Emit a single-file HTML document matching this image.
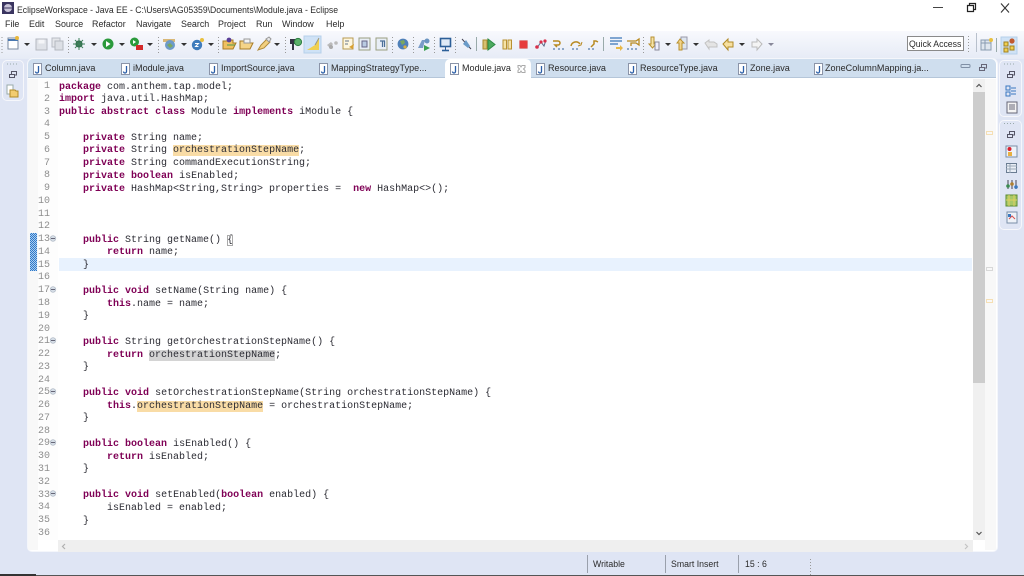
<!DOCTYPE html>
<html><head><meta charset="utf-8"><style>
html,body{margin:0;padding:0}
body{width:1024px;height:576px;overflow:hidden;position:relative;background:#dfe5f4;font-family:"Liberation Sans",sans-serif;color:#222}
.a{position:absolute}
.t{position:absolute;white-space:nowrap;font-size:9.6px;line-height:12px;color:#2a2a2a;transform-origin:0 50%;transform:scaleX(.945)}
.m{transform:scaleX(.93)}
.s{transform:scaleX(.91)}
pre{position:absolute;margin:0;font-family:"Liberation Mono",monospace;font-size:10px;line-height:12.77px;color:#2b2b33}
b{color:#7f0055;font-weight:bold}
i{font-style:normal}
.o{background:#f9dca6}.g{background:#d4d4d4}
</style></head><body>
<div class="a" style="left:0;top:0;width:1024px;height:31px;background:#fff"></div>
<div class="a" style="left:0;top:31px;width:1024px;height:28px;background:linear-gradient(#f8f9fd,#e6ebf6)"></div>
<div class="t" style="left:17px;top:4px;font-size:9.4px;transform:scaleX(.92)">EclipseWorkspace - Java EE - C:\Users\AG05359\Documents\Module.java - Eclipse</div>
<div class="t m" style="left:5px;top:19px">File</div><div class="t m" style="left:29px;top:19px">Edit</div><div class="t m" style="left:55px;top:19px">Source</div><div class="t m" style="left:92px;top:19px">Refactor</div><div class="t m" style="left:136px;top:19px">Navigate</div><div class="t m" style="left:181px;top:19px">Search</div><div class="t m" style="left:218px;top:19px">Project</div><div class="t m" style="left:256px;top:19px">Run</div><div class="t m" style="left:282px;top:19px">Window</div><div class="t m" style="left:326px;top:19px">Help</div>

<!-- editor panel -->
<div class="a" style="left:28px;top:59px;width:969px;height:492px;background:#fff;border-radius:5px 5px 4px 4px;box-shadow:0 0 0 1px #f4f6fb"></div>
<div class="a" style="left:28px;top:59px;width:968px;height:19px;background:#cfdeee;border-radius:5px 5px 0 0;border-bottom:1px solid #b5c6d9;box-sizing:border-box"></div>
<div class="a" style="left:445px;top:59px;width:86px;height:20px;background:#fff;border-radius:5px 5px 0 0"></div>
<div class="a" style="left:28px;top:79px;width:10px;height:471px;background:#f8f8f8"></div>
<div class="a" style="left:38px;top:79px;width:20px;height:461px;background:#fdfdfd"></div>
<div class="a" style="left:59px;top:258px;width:913px;height:13px;background:#e8f2fe"></div>
<div class="a" style="left:30px;top:233px;width:7px;height:38px;background:repeating-conic-gradient(#2f78c8 0 25%,#a9cdf0 0 50%) 0 0/2px 2px"></div>
<div class="a" style="left:973px;top:79px;width:12px;height:461px;background:#f0f0f0"></div>
<div class="a" style="left:973px;top:92px;width:12px;height:291px;background:#cdcdcd"></div>
<div class="a" style="left:985px;top:79px;width:11px;height:471px;background:#f8f8f8"></div>
<div class="a" style="left:58px;top:540px;width:915px;height:12px;background:#efefef"></div>
<div class="a" style="left:986px;top:131px;width:7px;height:4px;border:1px solid #f5dfb4;box-sizing:border-box"></div>
<div class="a" style="left:986px;top:267px;width:7px;height:4px;border:1px solid #d8d8d8;box-sizing:border-box"></div>
<div class="a" style="left:986px;top:299px;width:7px;height:4px;border:1px solid #f5dfb4;box-sizing:border-box"></div>

<!-- tabs text -->
<div class="t" style="left:45px;top:63px">Column.java</div>
<div class="t" style="left:133px;top:63px">iModule.java</div>
<div class="t" style="left:221px;top:63px">ImportSource.java</div>
<div class="t" style="left:331px;top:63px">MappingStrategyType...</div>
<div class="t" style="left:462px;top:63px">Module.java</div>
<div class="t" style="left:548px;top:63px">Resource.java</div>
<div class="t" style="left:640px;top:63px">ResourceType.java</div>
<div class="t" style="left:750px;top:63px">Zone.java</div>
<div class="t" style="left:825px;top:63px">ZoneColumnMapping.ja...</div>

<!-- line numbers -->
<pre style="left:37px;top:81px;width:13px;text-align:right;color:#8f8f8f;font-size:10px">1
2
3
4
5
6
7
8
9
10
11
12
13
14
15
16
17
18
19
20
21
22
23
24
25
26
27
28
29
30
31
32
33
34
35
36</pre>

<pre style="left:59px;top:81.5px"><b>package</b> com.anthem.tap.model;
<b>import</b> java.util.HashMap;
<b>public</b> <b>abstract</b> <b>class</b> Module <b>implements</b> iModule {

    <b>private</b> String name;
    <b>private</b> String <i class="o">orchestrationStepName</i>;
    <b>private</b> String commandExecutionString;
    <b>private</b> <b>boolean</b> isEnabled;
    <b>private</b> HashMap&lt;String,String&gt; properties =  <b>new</b> HashMap&lt;&gt;();



    <b>public</b> String getName() <i style="outline:1px solid #aaa;outline-offset:-1px">{</i>
        <b>return</b> name;
    }

    <b>public</b> <b>void</b> setName(String name) {
        <b>this</b>.name = name;
    }

    <b>public</b> String getOrchestrationStepName() {
        <b>return</b> <i class="g">orchestrationStepName</i>;
    }

    <b>public</b> <b>void</b> setOrchestrationStepName(String orchestrationStepName) {
        <b>this</b>.<i class="o">orchestrationStepName</i> = orchestrationStepName;
    }

    <b>public</b> <b>boolean</b> isEnabled() {
        <b>return</b> isEnabled;
    }

    <b>public</b> <b>void</b> setEnabled(<b>boolean</b> enabled) {
        isEnabled = enabled;
    }
</pre>

<!-- status bar -->
<div class="a" style="left:587px;top:555px;width:1px;height:18px;background:#9aa0ac"></div>
<div class="a" style="left:665px;top:555px;width:1px;height:18px;background:#9aa0ac"></div>
<div class="a" style="left:738px;top:555px;width:1px;height:18px;background:#9aa0ac"></div>
<div class="t s" style="left:593px;top:559px">Writable</div>
<div class="t s" style="left:671px;top:559px">Smart Insert</div>
<div class="t s" style="left:745px;top:559px">15 : 6</div>
<div class="a" style="left:0;top:575px;width:1024px;height:1px;background:#555"></div>
<div class="a" style="left:0;top:574px;width:36px;height:2px;background:#333"></div>

<!-- quick access -->
<div class="a" style="left:907px;top:36px;width:57px;height:15px;box-sizing:border-box;border:1px solid #8a8a8a;background:#fff"></div>
<div class="t" style="left:909px;top:38px;font-size:9px;line-height:12px;transform:scaleX(.97)">Quick Access</div>

<!-- trims -->
<div class="a" style="left:2px;top:60px;width:22px;height:41px;box-sizing:border-box;border:1px solid #f6f7fb;border-radius:5px"></div>
<div class="a" style="left:999px;top:60px;width:23px;height:57px;box-sizing:border-box;border:1px solid #f6f7fb;border-radius:5px"></div>
<div class="a" style="left:999px;top:120px;width:23px;height:110px;box-sizing:border-box;border:1px solid #f6f7fb;border-radius:5px"></div>

<svg class="a" style="left:0;top:0" width="1024" height="576" viewBox="0 0 1024 576" fill="none">
<defs>
<g id="j"><path d="M1.5 .5h8v11h-8z" fill="#fff" stroke="#8b94a8"/><path d="M6.5 3v5.5a1.5 1.5 0 0 1-3 0" stroke="#2b5fa8" stroke-width="1.3"/></g>
<g id="dr"><path d="M0 0l3 3 3-3z" fill="#333"/></g>
<path id="ds" d="M0 0v1M0 3v1M0 6v1M0 9v1M0 12v1M0 15v1" stroke="#999"/>
</defs>
<!-- app icon -->
<rect x="2" y="2" width="12" height="12" fill="#3a3560"/><circle cx="8" cy="8" r="4" fill="#c9c4d8"/><path d="M4 8h8" stroke="#3a3560"/>
<!-- window buttons -->
<path d="M933 7.5h10" stroke="#444"/>
<path d="M967.5 5.5h6v6h-6zM969.5 5.5v-2h6v6h-2" stroke="#222" stroke-width="1.2"/>
<path d="M1001 3.5l8 9M1009 3.5l-8 9" stroke="#333" stroke-width="1.1"/>
<!-- separators -->
<use href="#ds" x="2" y="37"/><use href="#ds" x="68.5" y="37"/><use href="#ds" x="158.5" y="37"/><use href="#ds" x="218.5" y="37"/><use href="#ds" x="285.5" y="37"/><use href="#ds" x="392.5" y="37"/><use href="#ds" x="413.5" y="37"/><use href="#ds" x="434.5" y="37"/><use href="#ds" x="455.5" y="37"/><use href="#ds" x="643.5" y="37"/><use href="#ds" x="968.5" y="36"/>
<path d="M476.5 37v14M603.5 37v14" stroke="#9aa"/>
<path d="M976.5 33v19" stroke="#b8c0cc"/><path d="M996.5 38v14" stroke="#9aa"/><use href="#ds" x="810.5" y="559"/>
<!-- toolbar left -->
<rect x="8" y="38" width="10" height="11" fill="#fff" stroke="#7a8aa0"/><path d="M8 40h10" stroke="#4a78b0" stroke-width="2"/><circle cx="17" cy="38" r="2" fill="#e8b83c"/><use href="#dr" x="24" y="43"/>
<rect x="36" y="39" width="11" height="11" fill="#dfe2e8" stroke="#b4b8c0"/><rect x="38.5" y="39.5" width="6" height="4" fill="#f4f5f8"/>
<rect x="52" y="38" width="8" height="9" fill="#e4e6ea" stroke="#b8bcc4"/><rect x="55" y="41" width="8" height="9" fill="#dcdfe5" stroke="#b4b8c0"/>
<circle cx="79" cy="44" r="3.6" fill="#2f6b4a"/><path d="M79 38v12M73 44h12M75 40l8 8M83 40l-8 8" stroke="#3e7f5a"/><use href="#dr" x="91" y="43"/>
<circle cx="108" cy="44" r="5.5" fill="#2b9a3c"/><path d="M106 41l4.5 3-4.5 3z" fill="#fff"/><use href="#dr" x="119" y="43"/>
<circle cx="134.5" cy="42" r="4.5" fill="#2b9a3c"/><path d="M133 40l3 2-3 2z" fill="#fff"/><rect x="136" y="45" width="7" height="5" fill="#d42a2a"/><use href="#dr" x="147" y="43"/>
<rect x="163" y="39" width="12" height="3" fill="#d8b878"/><circle cx="170" cy="45" r="5" fill="#6c9ac8"/><path d="M167 45l3-2 3 3-3 2z" fill="#7aa860"/><use href="#dr" x="181" y="43"/>
<circle cx="197" cy="45" r="5.2" fill="#3f7cbc"/><path d="M195 43.5h3.5l-3 3h3" stroke="#fff"/><circle cx="202" cy="40" r="2" fill="#e8c040"/><use href="#dr" x="208" y="43"/>
<path d="M223 49v-8h4l1-1h5v3h3l-3 6z" fill="#f0c060" stroke="#a87c28"/><circle cx="229" cy="40" r="2.4" fill="#5a3f98"/><path d="M227 45h8" stroke="#4a9a50"/>
<path d="M240 49v-8h4l1-1h5v3h3l-3 6z" fill="#f5d488" stroke="#a87c28"/><rect x="244" y="39" width="6" height="4" fill="#f4f4f4" stroke="#999"/>
<path d="M258 50l3-5 6-6 3 3-6 6z" fill="#f2d080" stroke="#b08a38"/><path d="M266 39l3-2 2 2-2 3z" fill="#e8e8e8" stroke="#999"/><use href="#dr" x="274" y="43"/>
<path d="M290 39h7v5h-3v6h-2v-6h-2z" fill="#334"/><circle cx="298" cy="42" r="3.6" fill="#5ab06a" stroke="#2f7f44"/>
<rect x="304" y="36" width="17" height="17" fill="#cfe2f6" stroke="#b6d0ea"/><path d="M307 50l8-5 4-7v12z" fill="#f0d050"/><path d="M315 45l4-7" stroke="#998"/>
<path d="M327 45l4-3 2 2-3 4z" fill="#bbb"/><circle cx="331" cy="47" r="2" fill="#aaa"/><circle cx="336" cy="43" r="1.8" fill="#bbb"/>
<rect x="343" y="38" width="10" height="11" fill="#fdf6df" stroke="#b79a50"/><path d="M345 41h4M345 44h3" stroke="#678"/><path d="M349 47l5-3-1 5z" fill="#d8a030"/>
<rect x="359" y="38" width="11" height="12" fill="#e8eef6" stroke="#9a9f80"/><rect x="362" y="41" width="5" height="6" fill="#b9cbe2" stroke="#668"/>
<rect x="376" y="38" width="11" height="12" fill="#e8eef6" stroke="#9a9f80"/><path d="M380 41h5M382.5 41v6M384.5 41v6" stroke="#4a6f98" stroke-width="1.2"/>
<circle cx="403" cy="44" r="5.4" fill="#4f80b8"/><path d="M400 41l4-1 1 3-3 2z" fill="#7aa860"/><circle cx="405" cy="47" r="1.6" fill="#d8b040"/>
<path d="M418 48l4-8h3l-2 8z" fill="#7a9cc8"/><circle cx="427" cy="41" r="2.5" fill="#6b94c0"/><path d="M424 45l6 3-6 3z" fill="#3aa050"/>
<rect x="440.500" y="38.500" width="10" height="8" fill="#dfeaf6" stroke="#2c5f98" stroke-width="1.6"/><path d="M442 50.500h7" stroke="#2c5f98" stroke-width="1.6"/><path d="M445.500 47v3" stroke="#2c5f98"/>
<path d="M462 39l9 10" stroke="#445" stroke-width="1"/><path d="M463 44l3-4 4 6-2 2z" fill="#6a9bc8"/>
<!-- debug group -->
<rect x="483" y="40" width="4" height="9" fill="#d8c070" stroke="#a88a30"/><path d="M488 39l7 5.5-7 5.5z" fill="#4caa60" stroke="#2d8a45"/>
<rect x="503" y="40" width="3.5" height="9" fill="#f5e3a8" stroke="#b89030"/><rect x="508" y="40" width="3.5" height="9" fill="#f5e3a8" stroke="#b89030"/>
<rect x="519.5" y="40.5" width="8" height="8" rx="1" fill="#e63c3c" stroke="#d88"/>
<path d="M537 48l4-6 3 4 2-6" stroke="#5a6a88"/><circle cx="537" cy="47" r="1.8" fill="#d8304a"/><circle cx="541" cy="42" r="1.6" fill="#d8304a"/><circle cx="545" cy="41" r="1.6" fill="#d8304a"/>
<path d="M553 41h5a2 2 0 0 1 0 4h-3l2 2" stroke="#b88a20" stroke-width="1.5"/><path d="M553 49h2M558 49h2M562 49h2" stroke="#2f5f98"/>
<path d="M571 46a5 5 0 0 1 9-2" stroke="#b88a20" stroke-width="1.5"/><path d="M578 46l3-1 1-3" stroke="#b88a20"/><path d="M572 49h2M576 49h2" stroke="#2f5f98"/>
<path d="M591 47l3-3v-3h2l2 1" stroke="#b88a20" stroke-width="1.5"/><path d="M588 49h2M592 49h2" stroke="#2f5f98"/>
<path d="M610 38h12M610 41h12M610 44h8" stroke="#3a76b8" stroke-width="1.3"/><path d="M616 47h4v-2l3 3-3 3v-2h-4z" fill="#e8b848"/>
<path d="M627 41h9l3-2v6l-3-2h-5v3" stroke="#b88a20" stroke-width="1.3"/><path d="M627 49h2M631 49h2M635 49h2" stroke="#2f5f98"/>
<path d="M651 37h3v7h2l-3.500 4-3.500-4h2z" fill="#f5e3a8" stroke="#b89030"/><rect x="655" y="42" width="4" height="8" fill="#eef" stroke="#889"/><use href="#dr" x="665" y="43"/>
<rect x="681" y="37" width="6" height="12" fill="#dde5ee" stroke="#99a"/><path d="M677 43l3-4 4 4h-2v7h-3v-7z" fill="#f3d58a" stroke="#b89030"/><use href="#dr" x="693" y="43"/>
<path d="M705 43l4-3v2h5l3 2v3h-8v2z" fill="#e4e4e4" stroke="#c2c2c2"/>
<path d="M723 44l5-5v3h5v5h-5v3z" fill="#f7e0a0" stroke="#b08a28"/><use href="#dr" x="739" y="43"/>
<path d="M762 44l-5-5v3h-5v5h5v3z" fill="#f4f4f4" stroke="#bbb"/><path d="M768 43l3 3 3-3z" fill="#889"/>
<!-- perspective -->
<rect x="981" y="40" width="10" height="10" fill="#dfe6ee" stroke="#8a9cb0"/><path d="M981 43h10M985 40v10" stroke="#8a9cb0"/><circle cx="991" cy="40" r="2" fill="#e8c040"/>
<rect x="1001" y="37" width="16" height="17" fill="#cfe2f6" stroke="#b6d0ea"/><rect x="1004" y="42" width="4" height="4" fill="#f0d050" stroke="#a08020"/><rect x="1004" y="48" width="4" height="4" fill="#f0d050" stroke="#a08020"/><rect x="1010" y="46" width="4" height="4" fill="#f0d050" stroke="#a08020"/><circle cx="1012" cy="41" r="2.6" fill="#c05a30"/>
<!-- tab icons -->
<use href="#j" x="32" y="63"/><use href="#j" x="120" y="63"/><use href="#j" x="208" y="63"/><use href="#j" x="318" y="63"/><use href="#j" x="449" y="63"/><use href="#j" x="535" y="63"/><use href="#j" x="627" y="63"/><use href="#j" x="737" y="63"/><use href="#j" x="813" y="63"/>
<path d="M518 65.500h2l1 1.500 1-1.500h3v2l-1.500 1.500 1.500 1.500v2h-3l-1-1.500-1 1.500h-2v-2l1.500-1.500-1.500-1.500z" fill="#fff" stroke="#aaa"/>
<rect x="961" y="64.500" width="9" height="3" rx="1" stroke="#7f8fa5"/>
<path d="M979.500 67.500h5v3h-5zM981.500 67v-2.500h5v3.500h-2" stroke="#667"/>
<!-- left trim -->
<path d="M7 64h12" stroke="#9aa" stroke-dasharray="1 2"/>
<path d="M9.500 74.500h5v3h-5zM11.500 74v-2.500h5v3.500h-2" stroke="#556"/>
<rect x="7" y="85" width="6" height="9" fill="#fff" stroke="#9aa"/><path d="M10 90h5l1 1h2v6h-8z" fill="#f2cc70" stroke="#b08a28"/>
<!-- right trim -->
<path d="M1004 64h12" stroke="#9aa" stroke-dasharray="1 2"/>
<path d="M1007.500 74.500h5v3h-5zM1009.500 74v-2.500h5v3.500h-2" stroke="#556"/>
<path d="M1006 86h4v4h-4zM1006 92h4v4h-4z" stroke="#3a78c0"/><path d="M1011 88h5M1011 94h5M1011 91h5" stroke="#3a78c0"/>
<rect x="1007" y="102" width="10" height="11" fill="#f4f4f4" stroke="#667"/><path d="M1009 105h6M1009 107h6M1009 109h6" stroke="#667"/>
<path d="M1004 123.500h12" stroke="#9aa" stroke-dasharray="1 2" />
<path d="M1007.500 134.500h5v3h-5zM1009.500 134v-2.500h5v3.500h-2" stroke="#556"/>
<rect x="1006" y="146" width="11" height="11" fill="#eef2f8" stroke="#7a8ea8"/><circle cx="1009.500" cy="149" r="2" fill="#d82030"/><rect x="1008" y="152" width="4" height="4" fill="#e8b040"/>
<rect x="1006.500" y="163.500" width="10" height="9" fill="#e9eef6" stroke="#6a7c92"/><path d="M1006 166h11M1006 169h11M1010 164v9" stroke="#9aa8b8"/>
<path d="M1008 180v9M1012 180v9M1016 180v9" stroke="#445"/><circle cx="1008" cy="186" r="1.800" fill="#3a8a50"/><circle cx="1012" cy="184" r="1.800" fill="#b08030"/><circle cx="1016" cy="187" r="1.800" fill="#3a78c0"/>
<path d="M1006 195h11v11h-11z" fill="#a8c868" stroke="#5a8a30"/><path d="M1009 195v11M1014 195v11M1006 200h11" stroke="#e0d060"/>
<rect x="1007" y="212" width="10" height="11" fill="#eef2f8" stroke="#7a8ea8"/><path d="M1009 219l3-3 3 3" stroke="#d85050"/><path d="M1008 214h3v3h-3z" fill="#3a78c0"/>
<!-- fold markers -->
<g fill="#d5dde6" stroke="#aab4c0" stroke-width=".6"><circle cx="53" cy="238.500" r="2.800"/><circle cx="53" cy="289.500" r="2.800"/><circle cx="53" cy="340.500" r="2.800"/><circle cx="53" cy="391.500" r="2.800"/><circle cx="53" cy="442.500" r="2.800"/><circle cx="53" cy="493.500" r="2.800"/></g>
<path d="M51 238.500h4M51 289.500h4M51 340.500h4M51 391.500h4M51 442.500h4M51 493.500h4" stroke="#667"/>
<!-- scroll arrows -->
<path d="M976.500 87l2.500-2.500 2.500 2.500" stroke="#555" stroke-width="1.200"/>
<path d="M976.500 532l2.500 2.500 2.500-2.500" stroke="#555" stroke-width="1.200"/>
<path d="M65 544l-2.500 2.500 2.500 2.500" stroke="#b0b0b0" stroke-width="1.200"/>
<path d="M965 544l2.500 2.500-2.500 2.500" stroke="#c4c4c4" stroke-width="1.200"/>
</svg>
</body></html>
